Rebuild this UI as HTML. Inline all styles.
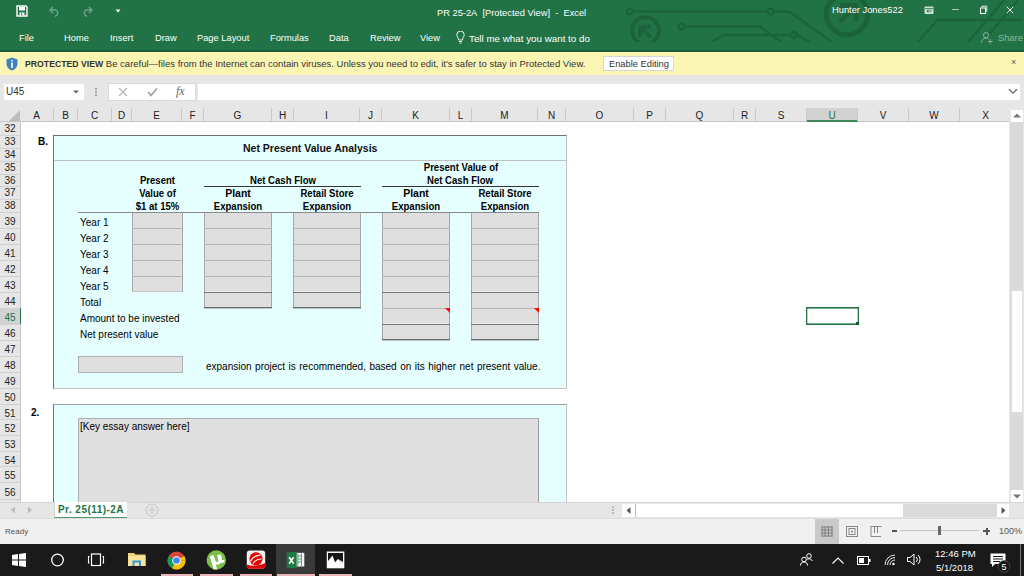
<!DOCTYPE html>
<html><head><meta charset="utf-8">
<style>
*{margin:0;padding:0;box-sizing:border-box}
html,body{width:1024px;height:576px;overflow:hidden;background:#fff;font-family:"Liberation Sans",sans-serif}
.a{position:absolute}
.t{position:absolute;white-space:nowrap;line-height:1}
#title{left:0;top:0;width:1024px;height:52px;background:#217346}
.ui{color:#fff;font-size:9.3px}
.hdr{background:#e6e6e6}
.ch{position:absolute;top:108px;height:13px;font-size:10px;color:#222;text-align:center;line-height:15px;border-right:1px solid #c8c8c8}
.rh{position:absolute;left:0;width:20px;font-size:10px;color:#222;text-align:center;border-bottom:1px solid #d0d0d0;background:#e6e6e6}
.s{font-size:10px;color:#000}
.b{font-weight:bold}
.g{position:absolute;background:#dfdfdf}
</style></head><body>

<!-- TITLE BAR -->
<div id="title" class="a">
  <svg class="a" style="left:0;top:0" width="1024" height="42" viewBox="0 0 1024 42">
    <g fill="none" stroke="#1c633b" stroke-width="2.4">
      <circle cx="630" cy="11.5" r="3"/>
      <path d="M633 11.5 H767.5"/>
      <circle cx="770.5" cy="11.5" r="3"/>
      <path d="M773.5 11.5 H789 L832 42"/>
      <circle cx="681.5" cy="26.5" r="3"/>
      <path d="M684.5 26.5 H760 L781 42"/>
      <path d="M711 42 L724 35 H791"/>
      <circle cx="794" cy="35" r="3"/>
      <path d="M797 35 L810 42"/>
      <circle cx="645.5" cy="30.5" r="13.4" stroke-width="3.8"/>
      <path d="M651 37.5 L640 26.5 M640.2 37 V26.8 H650.5" stroke-width="4"/>
      <circle cx="847" cy="14.2" r="20.6" stroke-width="5.2"/>
      <path d="M840 21.5 L855.5 6 M840 5.5 H856 V21" stroke-width="5"/>
      <path d="M918 42 L937.5 20 H1021"/>
      <path d="M968 42 L1005 -1"/>
      <path d="M986 38 L1019 -1"/>
    </g>
  </svg>
  <!-- save -->
  <svg class="a" style="left:16px;top:5px" width="12" height="12" viewBox="0 0 12 12">
    <path d="M1 1 H10 L11 2 V11 H1 Z" fill="none" stroke="#fff" stroke-width="1.4"/>
    <rect x="3" y="2" width="6" height="3.5" fill="#fff"/>
    <rect x="3.5" y="7.5" width="5" height="3" fill="#fff"/>
    <rect x="5.2" y="8" width="1" height="2.5" fill="#217346"/>
  </svg>
  <!-- undo -->
  <svg class="a" style="left:48px;top:5px" width="13" height="12" viewBox="0 0 13 12">
    <path d="M3 5 H8 A3.5 3.5 0 0 1 8 11 H7 M5 2 L2 5 L5 8" fill="none" stroke="#6ea487" stroke-width="1.4"/>
  </svg>
  <svg class="a" style="left:81px;top:5px" width="13" height="12" viewBox="0 0 13 12">
    <path d="M10 5 H5 A3.5 3.5 0 0 0 5 11 H6 M8 2 L11 5 L8 8" fill="none" stroke="#6ea487" stroke-width="1.4"/>
  </svg>
  <svg class="a" style="left:115px;top:8px" width="6" height="5" viewBox="0 0 6 5">
    <path d="M0.5 1.5 H5.5 L3 4.5Z" fill="#fff"/>
  </svg>
  <div class="t ui" id="ttl" style="left:437px;top:9px">PR 25-2A&nbsp; [Protected View]&nbsp; -&nbsp; Excel</div>
  <div class="t ui" id="user" style="left:832px;top:6px">Hunter Jones522</div>
  <!-- window buttons -->
  <svg class="a" style="left:924px;top:6px" width="10" height="8" viewBox="0 0 10 8">
    <rect x="1" y="1" width="8" height="6.5" fill="#b9d6c4" stroke="#e8f2ec" stroke-width="0.8"/>
    <path d="M1 2.6 H9" stroke="#217346" stroke-width="0.8"/>
    <path d="M3 5 H7.5 M4.3 3.8 L3 5 L4.3 6.2" fill="none" stroke="#217346" stroke-width="0.8"/>
  </svg>
  <div class="a" style="left:952px;top:9px;width:7px;height:1px;background:#a9ccb7"></div>
  <svg class="a" style="left:979px;top:5px" width="9" height="10" viewBox="0 0 9 10">
    <rect x="1.5" y="3" width="5" height="5.5" fill="none" stroke="#fff" stroke-width="1"/>
    <path d="M3 2.5 V1.2 H7.8 V6.5 H7" fill="none" stroke="#fff" stroke-width="0.9"/>
  </svg>
  <svg class="a" style="left:1006px;top:6px" width="8" height="8" viewBox="0 0 8 8">
    <path d="M0.6 0.6 L7.4 7.4 M7.4 0.6 L0.6 7.4" stroke="#fff" stroke-width="0.9"/>
  </svg>
  <!-- tabs -->
  <div class="t ui" style="left:19px;top:34px">File</div>
  <div class="t ui" style="left:64px;top:34px">Home</div>
  <div class="t ui" style="left:110px;top:34px">Insert</div>
  <div class="t ui" style="left:155px;top:34px">Draw</div>
  <div class="t ui" style="left:197px;top:34px">Page Layout</div>
  <div class="t ui" style="left:270px;top:34px">Formulas</div>
  <div class="t ui" style="left:329px;top:34px">Data</div>
  <div class="t ui" style="left:370px;top:34px">Review</div>
  <div class="t ui" style="left:420px;top:34px">View</div>
  <svg class="a" style="left:456px;top:31px" width="9" height="13" viewBox="0 0 9 13">
    <path d="M2.5 9 C2.5 6.5 0.8 5.8 0.8 3.8 A3.7 3.7 0 0 1 8.2 3.8 C8.2 5.8 6.5 6.5 6.5 9 Z M3 10.5 H6 M3.5 12 H5.5" fill="none" stroke="#fff" stroke-width="0.9"/>
  </svg>
  <div class="t ui" style="left:469px;top:34px;font-size:9.8px">Tell me what you want to do</div>
  <svg class="a" style="left:981px;top:32px" width="12" height="12" viewBox="0 0 12 12">
    <circle cx="5" cy="3.2" r="2.6" fill="none" stroke="#8ab79c" stroke-width="1"/>
    <path d="M0.5 11 C0.5 7.5 2.5 6.2 5 6.2 C6.2 6.2 7 6.5 7.6 7 M7 9.5 H11.5 M9.25 7.2 V11.8" fill="none" stroke="#8ab79c" stroke-width="0.9"/>
  </svg>
  <div class="t ui" style="left:998px;top:34px;color:#8ab79c">Share</div>
  <div class="a" style="left:0;top:50px;width:1024px;height:2px;background:#195c36"></div>
</div>

<!-- PROTECTED VIEW BAR -->
<div class="a" style="left:0;top:52px;width:1024px;height:23px;background:#fbf5b4"></div>
<svg class="a" style="left:6px;top:57px" width="12" height="14" viewBox="0 0 12 14">
  <path d="M6 0.5 L11.5 2.5 V6.5 C11.5 10 9 12.5 6 13.5 C3 12.5 0.5 10 0.5 6.5 V2.5 Z" fill="#3f7fc4"/>
  <rect x="5.2" y="5.5" width="1.6" height="5.5" fill="#fff"/>
  <circle cx="6" cy="3.7" r="0.9" fill="#fff"/>
</svg>
<div class="t" style="left:25px;top:59px;font-size:9.5px;color:#333"><b style="font-size:8.7px">PROTECTED VIEW</b> Be careful—files from the Internet can contain viruses. Unless you need to edit, it's safer to stay in Protected View.</div>
<div class="a" style="left:603px;top:56px;width:71px;height:15px;background:#fff;border:1px solid #d6d6d6"></div>
<div class="t" style="left:609px;top:60px;font-size:9.3px;color:#333">Enable Editing</div>
<div class="t" style="left:1011px;top:58px;font-size:9px;color:#555">×</div>

<!-- FORMULA BAR -->
<div class="a" style="left:0;top:75px;width:1024px;height:46px;background:#e6e6e6"></div>
<div class="a" style="left:4px;top:84px;width:80px;height:16px;background:#fff"></div>
<div class="t" style="left:6px;top:87px;font-size:10px;color:#333">U45</div>
<svg class="a" style="left:73px;top:90px" width="6" height="4" viewBox="0 0 6 4"><path d="M0 0.5 H6 L3 3.5Z" fill="#666"/></svg>
<div class="a" style="left:95px;top:88px;width:2px;height:2px;background:#aaa"></div>
<div class="a" style="left:95px;top:91px;width:2px;height:2px;background:#aaa"></div>
<div class="a" style="left:95px;top:94px;width:2px;height:2px;background:#aaa"></div>
<div class="a" style="left:108px;top:83px;width:88px;height:18px;background:#fff;border:1px solid #dadada"></div>
<svg class="a" style="left:118px;top:87px" width="10" height="10" viewBox="0 0 10 10"><path d="M1 1 L9 9 M9 1 L1 9" stroke="#b4b4b4" stroke-width="1.2"/></svg>
<svg class="a" style="left:147px;top:87px" width="11" height="10" viewBox="0 0 11 10"><path d="M1 5 L4 8.3 L10 1.5" fill="none" stroke="#a4a4a4" stroke-width="1.8"/></svg>
<div class="t" style="left:176px;top:85px;font-size:12px;color:#666;font-family:'Liberation Serif',serif;font-style:italic">fx</div>
<div class="a" style="left:198px;top:84px;width:822px;height:16px;background:#fff"></div>
<svg class="a" style="left:1008px;top:88px" width="10" height="7" viewBox="0 0 10 7"><path d="M1 1.2 L5 5.2 L9 1.2" fill="none" stroke="#666" stroke-width="1.3"/></svg>

<!-- COLUMN HEADERS -->
<div class="a" style="left:0;top:121px;width:1024px;height:1px;background:#c6c6c6"></div>
<svg class="a" style="left:9px;top:110px" width="11" height="11" viewBox="0 0 11 11"><path d="M11 0 V11 H0Z" fill="#bdbdbd"/></svg>
<div class="a" style="left:807px;top:108px;width:51px;height:13px;background:#d2d2d2"></div>
<div class="a" style="left:807px;top:120px;width:51px;height:1.5px;background:#3f8a5c"></div>
<div id="cols"><div class="ch" style="left:20px;width:34px">A</div>
<div class="ch" style="left:54px;width:24px">B</div>
<div class="ch" style="left:78px;width:34px">C</div>
<div class="ch" style="left:112px;width:20px">D</div>
<div class="ch" style="left:132px;width:50px">E</div>
<div class="ch" style="left:182px;width:22px">F</div>
<div class="ch" style="left:204px;width:68px">G</div>
<div class="ch" style="left:272px;width:22px">H</div>
<div class="ch" style="left:294px;width:66px">I</div>
<div class="ch" style="left:360px;width:22px">J</div>
<div class="ch" style="left:382px;width:68px">K</div>
<div class="ch" style="left:450px;width:22px">L</div>
<div class="ch" style="left:472px;width:66px">M</div>
<div class="ch" style="left:538px;width:28px">N</div>
<div class="ch" style="left:566px;width:68px">O</div>
<div class="ch" style="left:634px;width:32px">P</div>
<div class="ch" style="left:666px;width:68px">Q</div>
<div class="ch" style="left:734px;width:22px">R</div>
<div class="ch" style="left:756px;width:51px">S</div>
<div class="ch" style="left:807px;width:51px;color:#217346">U</div>
<div class="ch" style="left:858px;width:51px">V</div>
<div class="ch" style="left:909px;width:51px">W</div>
<div class="ch" style="left:960px;width:51px;border-right:none">X</div>
</div><!--/cols-->

<!-- ROW HEADERS -->
<div id="rows"><div class="a" style="left:0;top:122px;width:20px;height:380px;background:#e6e6e6"></div>
<div class="rh" style="top:123px;height:13px;line-height:12px">32</div>
<div class="rh" style="top:136px;height:13px;line-height:12px">33</div>
<div class="rh" style="top:149px;height:13px;line-height:12px">34</div>
<div class="rh" style="top:162px;height:13px;line-height:12px">35</div>
<div class="rh" style="top:175px;height:12px;line-height:11px">36</div>
<div class="rh" style="top:187px;height:13px;line-height:12px">37</div>
<div class="rh" style="top:200px;height:13px;line-height:12px">38</div>
<div class="rh" style="top:213px;height:16px;line-height:18px">39</div>
<div class="rh" style="top:229px;height:16px;line-height:18px">40</div>
<div class="rh" style="top:245px;height:16px;line-height:18px">41</div>
<div class="rh" style="top:261px;height:16px;line-height:18px">42</div>
<div class="rh" style="top:277px;height:16px;line-height:18px">43</div>
<div class="rh" style="top:293px;height:16px;line-height:18px">44</div>
<div class="rh" style="top:309px;height:16px;line-height:18px;color:#217346;background:#d2d2d2">45</div>
<div class="rh" style="top:325px;height:16px;line-height:18px">46</div>
<div class="rh" style="top:341px;height:16px;line-height:18px">47</div>
<div class="rh" style="top:357px;height:16px;line-height:18px">48</div>
<div class="rh" style="top:373px;height:16px;line-height:18px">49</div>
<div class="rh" style="top:389px;height:16px;line-height:18px">50</div>
<div class="rh" style="top:405px;height:15px;line-height:17px">51</div>
<div class="rh" style="top:420px;height:16px;line-height:18px">52</div>
<div class="rh" style="top:436px;height:16px;line-height:18px">53</div>
<div class="rh" style="top:452px;height:15px;line-height:17px">54</div>
<div class="rh" style="top:467px;height:16px;line-height:18px">55</div>
<div class="rh" style="top:483px;height:17px;line-height:19px">56</div>
</div><!--/rows-->
<div class="a" style="left:20px;top:121px;width:1px;height:381px;background:#c6c6c6"></div>
<div class="a" style="left:20px;top:308px;width:1px;height:16px;background:#217346"></div>

<!-- SHEET CONTENT -->
<div class="t s b" style="left:38px;top:137px">B.</div>
<!-- table 1 box -->
<div class="a" style="left:53px;top:135px;width:514px;height:254px;background:#e5ffff;border-left:1px solid #707070;border-top:1px solid #707070;border-right:1px solid #c4c4c4;border-bottom:1px solid #c4c4c4"></div>
<div class="a" style="left:54px;top:160px;width:512px;height:1px;background:#c0c0c0"></div>
<div class="t b" style="left:243px;top:143px;font-size:10.5px;color:#111">Net Present Value Analysis</div>

<div class="t s b" style="font-size:10.2px;transform:scaleX(0.94);left:411px;top:163px;width:100px;text-align:center">Present Value of</div>
<div class="t s b" style="font-size:10.2px;transform:scaleX(0.94);left:233px;top:176px;width:100px;text-align:center">Net Cash Flow</div>
<div class="t s b" style="font-size:10.2px;transform:scaleX(0.94);left:410px;top:176px;width:100px;text-align:center">Net Cash Flow</div>
<div class="a" style="left:204px;top:186px;width:157px;height:1px;background:#333"></div>
<div class="a" style="left:382px;top:186px;width:157px;height:1px;background:#333"></div>

<div class="t s b" style="font-size:10.2px;transform:scaleX(0.94);left:132px;top:176px;width:51px;text-align:center">Present</div>
<div class="t s b" style="font-size:10.2px;transform:scaleX(0.94);left:132px;top:189px;width:51px;text-align:center">Value of</div>
<div class="t s b" style="font-size:10.2px;transform:scaleX(0.94);left:132px;top:202px;width:51px;text-align:center">$1 at 15%</div>

<div class="t s b" style="font-size:10.5px;left:204px;top:188px;width:68px;text-align:center">Plant</div>
<div class="t s b" style="font-size:10.2px;transform:scaleX(0.94);left:204px;top:202px;width:68px;text-align:center">Expansion</div>
<div class="t s b" style="font-size:10.2px;transform:scaleX(0.94);left:293px;top:189px;width:68px;text-align:center">Retail Store</div>
<div class="t s b" style="font-size:10.2px;transform:scaleX(0.94);left:293px;top:202px;width:68px;text-align:center">Expansion</div>
<div class="t s b" style="font-size:10.5px;left:382px;top:188px;width:68px;text-align:center">Plant</div>
<div class="t s b" style="font-size:10.2px;transform:scaleX(0.94);left:382px;top:202px;width:68px;text-align:center">Expansion</div>
<div class="t s b" style="font-size:10.2px;transform:scaleX(0.94);left:471px;top:189px;width:68px;text-align:center">Retail Store</div>
<div class="t s b" style="font-size:10.2px;transform:scaleX(0.94);left:471px;top:202px;width:68px;text-align:center">Expansion</div>
<div class="a" style="left:78px;top:212px;width:461px;height:1px;background:#8a8a8a"></div>

<div id="cells"><div class="a" style="left:132px;top:213px;width:51px;height:79px;background:#dfdfdf;border-left:1px solid #a6a6a6;border-right:1px solid #a6a6a6"></div>
<div class="a" style="left:132px;top:228px;width:51px;height:1px;background:#b6b6b6"></div>
<div class="a" style="left:132px;top:244px;width:51px;height:1px;background:#b6b6b6"></div>
<div class="a" style="left:132px;top:260px;width:51px;height:1px;background:#b6b6b6"></div>
<div class="a" style="left:132px;top:276px;width:51px;height:1px;background:#b6b6b6"></div>
<div class="a" style="left:132px;top:291px;width:51px;height:1px;background:#c4c4c4"></div>
<div class="a" style="left:204px;top:213px;width:68px;height:95px;background:#dfdfdf;border-left:1px solid #a6a6a6;border-right:1px solid #a6a6a6"></div>
<div class="a" style="left:204px;top:228px;width:68px;height:1px;background:#b6b6b6"></div>
<div class="a" style="left:204px;top:244px;width:68px;height:1px;background:#b6b6b6"></div>
<div class="a" style="left:204px;top:260px;width:68px;height:1px;background:#b6b6b6"></div>
<div class="a" style="left:204px;top:276px;width:68px;height:1px;background:#b6b6b6"></div>
<div class="a" style="left:204px;top:292px;width:68px;height:1px;background:#767676"></div>
<div class="a" style="left:205px;top:291px;width:66px;height:1px;background:#ececec"></div>
<div class="a" style="left:204px;top:307px;width:68px;height:1px;background:#6a6a6a"></div>
<div class="a" style="left:204px;top:308px;width:68px;height:1px;background:#b8c8c8"></div>
<div class="a" style="left:293px;top:213px;width:68px;height:95px;background:#dfdfdf;border-left:1px solid #a6a6a6;border-right:1px solid #a6a6a6"></div>
<div class="a" style="left:293px;top:228px;width:68px;height:1px;background:#b6b6b6"></div>
<div class="a" style="left:293px;top:244px;width:68px;height:1px;background:#b6b6b6"></div>
<div class="a" style="left:293px;top:260px;width:68px;height:1px;background:#b6b6b6"></div>
<div class="a" style="left:293px;top:276px;width:68px;height:1px;background:#b6b6b6"></div>
<div class="a" style="left:293px;top:292px;width:68px;height:1px;background:#767676"></div>
<div class="a" style="left:294px;top:291px;width:66px;height:1px;background:#ececec"></div>
<div class="a" style="left:293px;top:307px;width:68px;height:1px;background:#6a6a6a"></div>
<div class="a" style="left:293px;top:308px;width:68px;height:1px;background:#b8c8c8"></div>
<div class="a" style="left:382px;top:213px;width:68px;height:127px;background:#dfdfdf;border-left:1px solid #a6a6a6;border-right:1px solid #a6a6a6"></div>
<div class="a" style="left:382px;top:228px;width:68px;height:1px;background:#b6b6b6"></div>
<div class="a" style="left:382px;top:244px;width:68px;height:1px;background:#b6b6b6"></div>
<div class="a" style="left:382px;top:260px;width:68px;height:1px;background:#b6b6b6"></div>
<div class="a" style="left:382px;top:276px;width:68px;height:1px;background:#b6b6b6"></div>
<div class="a" style="left:382px;top:292px;width:68px;height:1px;background:#767676"></div>
<div class="a" style="left:383px;top:291px;width:66px;height:1px;background:#ececec"></div>
<div class="a" style="left:382px;top:308px;width:68px;height:1px;background:#b6b6b6"></div>
<div class="a" style="left:382px;top:324px;width:68px;height:1px;background:#767676"></div>
<div class="a" style="left:383px;top:323px;width:66px;height:1px;background:#ececec"></div>
<div class="a" style="left:382px;top:339px;width:68px;height:1px;background:#6a6a6a"></div>
<div class="a" style="left:382px;top:340px;width:68px;height:1px;background:#b8c8c8"></div>
<svg class="a" style="left:445px;top:308px" width="5" height="5" viewBox="0 0 5 5"><path d="M0 0 H5 V5Z" fill="#ff0000"/></svg>
<div class="a" style="left:471px;top:213px;width:68px;height:127px;background:#dfdfdf;border-left:1px solid #a6a6a6;border-right:1px solid #a6a6a6"></div>
<div class="a" style="left:471px;top:228px;width:68px;height:1px;background:#b6b6b6"></div>
<div class="a" style="left:471px;top:244px;width:68px;height:1px;background:#b6b6b6"></div>
<div class="a" style="left:471px;top:260px;width:68px;height:1px;background:#b6b6b6"></div>
<div class="a" style="left:471px;top:276px;width:68px;height:1px;background:#b6b6b6"></div>
<div class="a" style="left:471px;top:292px;width:68px;height:1px;background:#767676"></div>
<div class="a" style="left:472px;top:291px;width:66px;height:1px;background:#ececec"></div>
<div class="a" style="left:471px;top:308px;width:68px;height:1px;background:#b6b6b6"></div>
<div class="a" style="left:471px;top:324px;width:68px;height:1px;background:#767676"></div>
<div class="a" style="left:472px;top:323px;width:66px;height:1px;background:#ececec"></div>
<div class="a" style="left:471px;top:339px;width:68px;height:1px;background:#6a6a6a"></div>
<div class="a" style="left:471px;top:340px;width:68px;height:1px;background:#b8c8c8"></div>
<svg class="a" style="left:534px;top:308px" width="5" height="5" viewBox="0 0 5 5"><path d="M0 0 H5 V5Z" fill="#ff0000"/></svg>
</div><!--/cells-->

<div class="t s" style="left:80px;top:218px">Year 1</div>
<div class="t s" style="left:80px;top:234px">Year 2</div>
<div class="t s" style="left:80px;top:250px">Year 3</div>
<div class="t s" style="left:80px;top:266px">Year 4</div>
<div class="t s" style="left:80px;top:282px">Year 5</div>
<div class="t s" style="left:80px;top:298px">Total</div>
<div class="t s" style="left:80px;top:314px">Amount to be invested</div>
<div class="t s" style="left:80px;top:330px">Net present value</div>

<div class="g" style="left:78px;top:356px;width:105px;height:17px;border:1px solid #b0b0b0"></div>
<div class="t s" style="left:206px;top:362px;word-spacing:0.7px">expansion project is recommended, based on its higher net present value.</div>

<div class="t s b" style="left:31px;top:408px">2.</div>
<div class="a" style="left:53px;top:404px;width:514px;height:98px;background:#e5ffff;border-left:1px solid #707070;border-top:1px solid #9a9a9a;border-right:1px solid #c4c4c4"></div>
<div class="g" style="left:78px;top:418px;width:461px;height:84px;border-left:1px solid #b0b0b0;border-top:1px solid #b0b0b0;border-right:1px solid #9a9a9a"></div>
<div class="t s" style="left:80px;top:422px">[Key essay answer here]</div>

<!-- selected cell U45 -->
<div class="a" style="left:806px;top:307px;width:53px;height:18px;border:1px solid #217346;box-shadow:inset 0 1px 0 rgba(33,115,70,.6),inset 0 -1px 0 rgba(33,115,70,.6),inset 1px 0 0 rgba(33,115,70,.3),inset -1px 0 0 rgba(33,115,70,.3)"></div>
<div class="a" style="left:856px;top:322px;width:3px;height:3px;background:#0f5a2e"></div>

<!-- VERTICAL SCROLLBAR -->
<div class="a" style="left:1009px;top:108px;width:15px;height:394px;background:#e6e6e6"></div>
<div class="a" style="left:1011px;top:110px;width:12px;height:12px;background:#fff"></div>
<svg class="a" style="left:1013px;top:113px" width="8" height="5" viewBox="0 0 8 5"><path d="M0 4.5 L4 0.5 L8 4.5Z" fill="#777"/></svg>
<div class="a" style="left:1010px;top:122px;width:13px;height:368px;background:#dadada"></div>
<div class="a" style="left:1011px;top:290px;width:12px;height:123px;background:#fff;border:1px solid #ddd"></div>
<div class="a" style="left:1011px;top:490px;width:12px;height:12px;background:#fff"></div>
<svg class="a" style="left:1013px;top:494px" width="8" height="5" viewBox="0 0 8 5"><path d="M0 0.5 L4 4.5 L8 0.5Z" fill="#777"/></svg>

<!-- SHEET TAB BAR -->
<div class="a" style="left:0;top:502px;width:1024px;height:16px;background:#e6e6e6"></div>
<div class="a" style="left:0;top:502px;width:1024px;height:1px;background:#d4d4d4"></div>
<svg class="a" style="left:10px;top:506px" width="6" height="8" viewBox="0 0 6 8"><path d="M5 0.5 L1 4 L5 7.5Z" fill="#bbb"/></svg>
<svg class="a" style="left:27px;top:506px" width="6" height="8" viewBox="0 0 6 8"><path d="M1 0.5 L5 4 L1 7.5Z" fill="#bbb"/></svg>
<div class="a" style="left:54px;top:502px;width:73px;height:16px;background:#fff;border-left:1px solid #cfcfcf;border-bottom:1px solid #4e9a6c"></div>
<div class="t b" style="left:58px;top:505px;font-size:10px;color:#217346;letter-spacing:0.45px">Pr. 25(11)-2A</div>
<svg class="a" style="left:145px;top:503px" width="14" height="14" viewBox="0 0 14 14"><circle cx="7" cy="7" r="6" fill="none" stroke="#c4c4c4"/><path d="M7 3.5 V10.5 M3.5 7 H10.5" stroke="#c4c4c4" stroke-width="1.2"/></svg>
<div class="a" style="left:612px;top:506px;width:2px;height:2px;background:#bbb"></div>
<div class="a" style="left:612px;top:509px;width:2px;height:2px;background:#bbb"></div>
<div class="a" style="left:612px;top:512px;width:2px;height:2px;background:#bbb"></div>
<div class="a" style="left:622px;top:504px;width:387px;height:13px;background:#dadada"></div>
<div class="a" style="left:622px;top:504px;width:14px;height:13px;background:#fff;border-right:1px solid #bdbdbd"></div>
<svg class="a" style="left:626px;top:507px" width="5" height="7" viewBox="0 0 5 7"><path d="M4.5 0 L0.5 3.5 L4.5 7Z" fill="#555"/></svg>
<div class="a" style="left:636px;top:504px;width:267px;height:13px;background:#fff"></div>
<div class="a" style="left:997px;top:504px;width:12px;height:13px;background:#fff"></div>
<svg class="a" style="left:1001px;top:507px" width="5" height="7" viewBox="0 0 5 7"><path d="M0.5 0 L4.5 3.5 L0.5 7Z" fill="#555"/></svg>

<!-- STATUS BAR -->
<div class="a" style="left:0;top:518px;width:1024px;height:26px;background:#f0f0f0;border-top:1px solid #dcdcdc"></div>
<div class="t" style="left:5px;top:528px;font-size:8px;color:#555">Ready</div>
<div class="a" style="left:815px;top:519px;width:24px;height:25px;background:#c9c9c9"></div>
<svg class="a" style="left:821px;top:526px" width="12" height="11" viewBox="0 0 12 11"><path d="M1 0.5 V10.5 M4 0.5 V10.5 M7.5 0.5 V10.5 M11 0.5 V10.5 M0.5 1 H11.5 M0.5 4 H11.5 M0.5 7 H11.5 M0.5 10 H11.5" stroke="#777" stroke-width="0.9"/></svg>
<svg class="a" style="left:846px;top:526px" width="12" height="11" viewBox="0 0 12 11"><rect x="0.5" y="0.5" width="11" height="10" fill="none" stroke="#888"/><rect x="3" y="2.5" width="6" height="6" fill="none" stroke="#888"/><rect x="5" y="4.5" width="2" height="2" fill="#999"/></svg>
<svg class="a" style="left:870px;top:526px" width="12" height="11" viewBox="0 0 12 11"><path d="M0.5 0.5 H11.5 M1 0.5 V10.5 H11 M4.5 0.5 V7 M7.5 0.5 V7" fill="none" stroke="#888"/></svg>
<div class="a" style="left:892px;top:530px;width:5px;height:2px;background:#555"></div>
<div class="a" style="left:900px;top:530px;width:79px;height:1px;background:#c4c4c4"></div>
<div class="a" style="left:938px;top:526px;width:3px;height:9px;background:#666"></div>
<div class="a" style="left:983px;top:530px;width:7px;height:2px;background:#555"></div>
<div class="a" style="left:985.5px;top:527.5px;width:2px;height:7px;background:#555"></div>
<div class="t" style="left:999px;top:527px;font-size:9px;color:#555">100%</div>

<!-- TASKBAR -->
<div class="a" style="left:0;top:544px;width:1024px;height:32px;background:#1a1a1a"></div>
<div class="a" style="left:276px;top:544px;width:39px;height:32px;background:#3a3a3a"></div>
<svg class="a" style="left:12px;top:553px" width="14" height="14" viewBox="0 0 14 14"><path d="M0 2 L6 1.1 V6.6 H0Z M7 1 L14 0 V6.6 H7Z M0 7.4 H6 V12.9 L0 12Z M7 7.4 H14 V14 L7 13Z" fill="#fff"/></svg>
<svg class="a" style="left:50px;top:553px" width="15" height="15" viewBox="0 0 15 15"><circle cx="7.5" cy="7" r="5.8" fill="none" stroke="#fff" stroke-width="1.3"/></svg>
<svg class="a" style="left:87px;top:553px" width="18" height="14" viewBox="0 0 18 14"><rect x="4.5" y="1" width="9" height="11.5" fill="none" stroke="#fff" stroke-width="1.2"/><path d="M2.5 3.5 H1.5 V10 H2.5 M15.5 3.5 H16.5 V10 H15.5" fill="none" stroke="#fff" stroke-width="1.1"/></svg>
<svg class="a" style="left:128px;top:552px" width="18" height="15" viewBox="0 0 18 15"><path d="M0 1 H6 L7.5 2.5 H17.5 V14 H0Z" fill="#f0d276"/><path d="M0 4 H17.5 V14 H0Z" fill="#fbe29a"/><path d="M4.5 14 V8.5 H13 V14 H11 V10.5 H6.5 V14Z" fill="#2b9ae0"/></svg>
<svg class="a" style="left:167px;top:551px" width="19" height="19" viewBox="0 0 19 19">
 <circle cx="9.5" cy="9.5" r="9" fill="#db4437"/>
 <path d="M9.5 9.5 L1.7 5 A9 9 0 0 0 5 17.3Z" fill="#0f9d58"/>
 <path d="M9.5 9.5 L5 17.3 A9 9 0 0 0 18.5 9.5 Z" fill="#f4c20d"/>
 <path d="M9.5 9.5 L18.5 9.5 A9 9 0 0 0 17.3 5 Z" fill="#f4c20d"/>
 <circle cx="9.5" cy="9.5" r="4.3" fill="#fff"/><circle cx="9.5" cy="9.5" r="3.3" fill="#4285f4"/>
</svg>
<svg class="a" style="left:206px;top:550px" width="20" height="20" viewBox="0 0 20 20"><circle cx="10.3" cy="10" r="9.7" fill="#7cbf4a"/><path d="M3.6 6 L7.5 5.3 L9.6 11 C10.3 12.6 11.8 12.4 12.4 11 L11.2 5 L15 4.4 L16.2 10.2 L18.3 9.8 L18.6 12.3 L14.6 13 C13 15.2 10.7 15 9.8 14 L11 19.2 L7.6 19.6Z" fill="#fff"/></svg>
<svg class="a" style="left:246px;top:550px" width="20" height="20" viewBox="0 0 20 20"><rect x="0.8" y="0.4" width="18.4" height="18.4" rx="3" fill="#f2f2f2"/><path d="M0.8 14.5 C6 16.5 13 16 19.2 13 V15.8 A3 3 0 0 1 16.2 18.8 H3.8 A3 3 0 0 1 0.8 15.8Z" fill="#e00000"/><circle cx="10" cy="8.8" r="6.6" fill="#e00000"/><path d="M4.5 11.5 C6 7.5 10 5.5 14.5 5.2 M7 13.5 C9 10 12 9 15.5 8.8" stroke="#f2f2f2" stroke-width="1.2" fill="none"/></svg>
<svg class="a" style="left:286px;top:551px" width="19" height="18" viewBox="0 0 19 18"><rect x="10" y="1.8" width="8.3" height="13.7" fill="#f4f4f4"/><path d="M11.8 2.5 V15 M15.5 2.5 V15 M11.8 5 H15.5 M11.8 8 H15.5 M11.8 11 H15.5" stroke="#5a9c74" stroke-width="1"/><path d="M0.8 1.6 L10.7 0.5 V17.5 L0.8 16.4Z" fill="#1f7a45"/><path d="M3.2 6.2 L7.6 12.6 M7.6 6.2 L3.2 12.6" stroke="#fff" stroke-width="1.6"/></svg>
<svg class="a" style="left:326px;top:551px" width="19" height="18" viewBox="0 0 19 18"><rect x="0.8" y="0.5" width="17.5" height="16.8" fill="#fff"/><path d="M2 2 H17 V11 L12 8 L9 11.2 L6.5 4.6 L2 10Z" fill="#161616"/><path d="M12.4 8.6 L16.5 12.2" stroke="#888" stroke-width="0.6"/></svg>
<div class="a" style="left:161px;top:574px;width:32px;height:2px;background:#e8b6ba"></div>
<div class="a" style="left:200px;top:574px;width:33px;height:2px;background:#e8b6ba"></div>
<div class="a" style="left:240px;top:574px;width:32px;height:2px;background:#e8b6ba"></div>
<div class="a" style="left:277px;top:574px;width:38px;height:2px;background:#e8b6ba"></div>
<div class="a" style="left:319px;top:574px;width:33px;height:2px;background:#e8b6ba"></div>

<svg class="a" style="left:800px;top:553px" width="13" height="13" viewBox="0 0 13 13"><circle cx="9" cy="3" r="2.3" fill="none" stroke="#fff"/><circle cx="4" cy="6.5" r="2.3" fill="none" stroke="#fff"/><path d="M0.5 12.5 C0.5 10 2 9 4 9 C6 9 7.5 10 7.5 12.5 M7 6.5 C8 5.5 11 5.5 12.5 8" fill="none" stroke="#fff"/></svg>
<svg class="a" style="left:832px;top:557px" width="12" height="7" viewBox="0 0 12 7"><path d="M0.5 6.5 L6 1 L11.5 6.5" fill="none" stroke="#fff" stroke-width="1.1"/></svg>
<svg class="a" style="left:857px;top:556px" width="14" height="9" viewBox="0 0 14 9"><rect x="0.5" y="0.5" width="11" height="8" fill="none" stroke="#fff"/><rect x="2" y="2" width="5" height="5" fill="#fff"/><rect x="12" y="3" width="1.5" height="3" fill="#fff"/></svg>
<svg class="a" style="left:884px;top:553px" width="12" height="13" viewBox="0 0 12 13"><path d="M1 12 A10 10 0 0 1 11 2 M3.5 12 A7.5 7.5 0 0 1 11 4.5 M6 12 A5 5 0 0 1 11 7" fill="none" stroke="#fff" stroke-width="0.9"/><circle cx="9.5" cy="11" r="1.2" fill="#fff"/></svg>
<svg class="a" style="left:907px;top:553px" width="15" height="13" viewBox="0 0 15 13"><path d="M0.5 4.5 H3 L7 1 V12 L3 8.5 H0.5Z" fill="none" stroke="#fff"/><path d="M9 4 A3 3 0 0 1 9 9 M11 2 A6 6 0 0 1 11 11" fill="none" stroke="#fff"/></svg>
<div class="t" style="left:935px;top:549px;font-size:9.5px;color:#fff">12:46 PM</div>
<div class="t" style="left:936px;top:563px;font-size:9.5px;color:#fff">5/1/2018</div>
<svg class="a" style="left:990px;top:553px" width="22" height="20" viewBox="0 0 22 20"><path d="M0.5 0.5 H15.5 V11 H5 L2 14 V11 H0.5Z" fill="#fff"/><path d="M3 3.5 H13 M3 6 H13 M3 8.5 H10" stroke="#161616" stroke-width="1"/><circle cx="14" cy="13.5" r="5.8" fill="#161616" stroke="#444" stroke-width="1"/><text x="14" y="16.8" font-size="9" text-anchor="middle" fill="#fff" font-family="Liberation Sans">5</text></svg>
<div class="a" style="left:1020px;top:544px;width:1px;height:32px;background:#777"></div>

</body></html>
